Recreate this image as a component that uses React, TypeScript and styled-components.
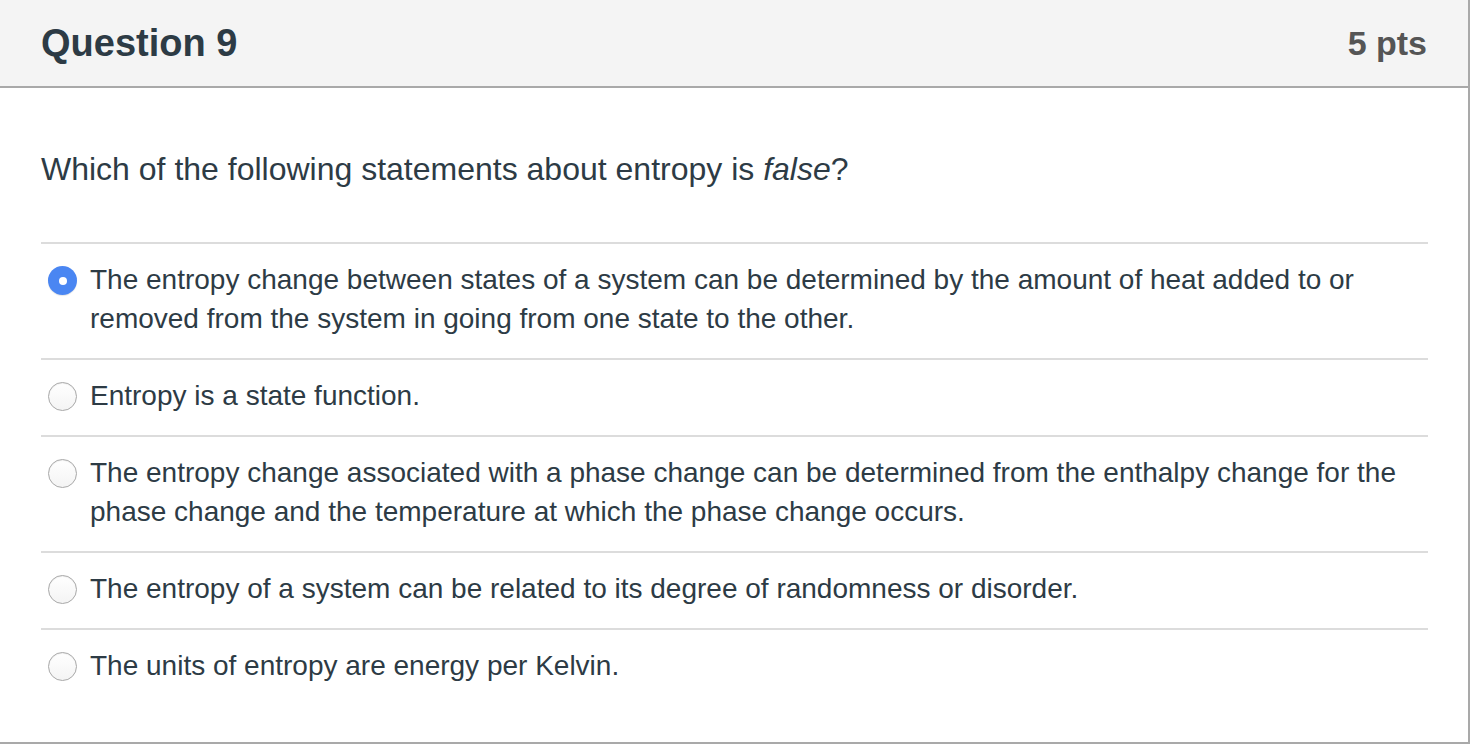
import React from "react";
import styled, { createGlobalStyle } from "styled-components";

const Global = createGlobalStyle`
  html, body { margin: 0; padding: 0; background: #ffffff; }
  body { font-family: "Liberation Sans", Arial, Helvetica, sans-serif; }
`;

const Card = styled.div`
  width: 1470px;
  height: 744px;
  box-sizing: border-box;
  border-right: 2px solid #a9a9a9;
  border-bottom: 2px solid #a9a9a9;
  background: #fff;
  color: #2d3b45;
  display: flex;
  flex-direction: column;
`;

const Header = styled.div`
  height: 86px;
  flex: 0 0 auto;
  background: #f4f4f4;
  border-bottom: 2px solid #a9a9a9;
  display: flex;
  align-items: center;
  justify-content: space-between;
  padding: 0 41px 0 41px;
`;

const Title = styled.h2`
  margin: 0;
  font-size: 38px;
  font-weight: 700;
  color: #2d3b45;
`;

const Points = styled.div`
  font-size: 34px;
  font-weight: 700;
  color: #555555;
`;

const Body = styled.div`
  padding: 61px 40px 0 41px;
`;

const Prompt = styled.p`
  margin: 0 0 53px 0;
  font-size: 32px;
  line-height: 40px;
`;

const List = styled.div`
  display: flex;
  flex-direction: column;
`;

const Row = styled.label`
  display: flex;
  align-items: flex-start;
  gap: 13px;
  padding: 16px 0 20px 7px;
  border-top: 2px solid #dcdcdc;
  font-size: 28px;
  line-height: 39px;
`;

const Radio = styled.span<{ $checked?: boolean }>`
  flex: 0 0 auto;
  width: 29px;
  height: 29px;
  margin-top: 6px;
  box-sizing: border-box;
  border-radius: 50%;
  display: flex;
  align-items: center;
  justify-content: center;
  background: ${(p) => (p.$checked ? "#4a86f2" : "linear-gradient(#ffffff, #f4f4f4)")};
  border: ${(p) => (p.$checked ? "none" : "1.5px solid #a8a8a8")};
  box-shadow: ${(p) => (p.$checked ? "0 1px 1px rgba(0,0,0,0.1)" : "inset 0 1px 1px rgba(0,0,0,0.06)")};
  &::after {
    content: "";
    display: ${(p) => (p.$checked ? "block" : "none")};
    width: 8px;
    height: 8px;
    border-radius: 50%;
    background: #fff;
  }
`;

const AnswerText = styled.span`
  flex: 1 1 auto;
`;

const answers = [
  "The entropy change between states of a system can be determined by the amount of heat added to or removed from the system in going from one state to the other.",
  "Entropy is a state function.",
  "The entropy change associated with a phase change can be determined from the enthalpy change for the phase change and the temperature at which the phase change occurs.",
  "The entropy of a system can be related to its degree of randomness or disorder.",
  "The units of entropy are energy per Kelvin.",
];

export default function App() {
  return (
    <>
      <Global />
      <Card>
        <Header>
          <Title>Question 9</Title>
          <Points>5 pts</Points>
        </Header>
        <Body>
          <Prompt>
            Which of the following statements about entropy is <em>false</em>?
          </Prompt>
          <List>
            {answers.map((a, i) => (
              <Row key={i}>
                <Radio $checked={i === 0} />
                <AnswerText>{a}</AnswerText>
              </Row>
            ))}
          </List>
        </Body>
      </Card>
    </>
  );
}
